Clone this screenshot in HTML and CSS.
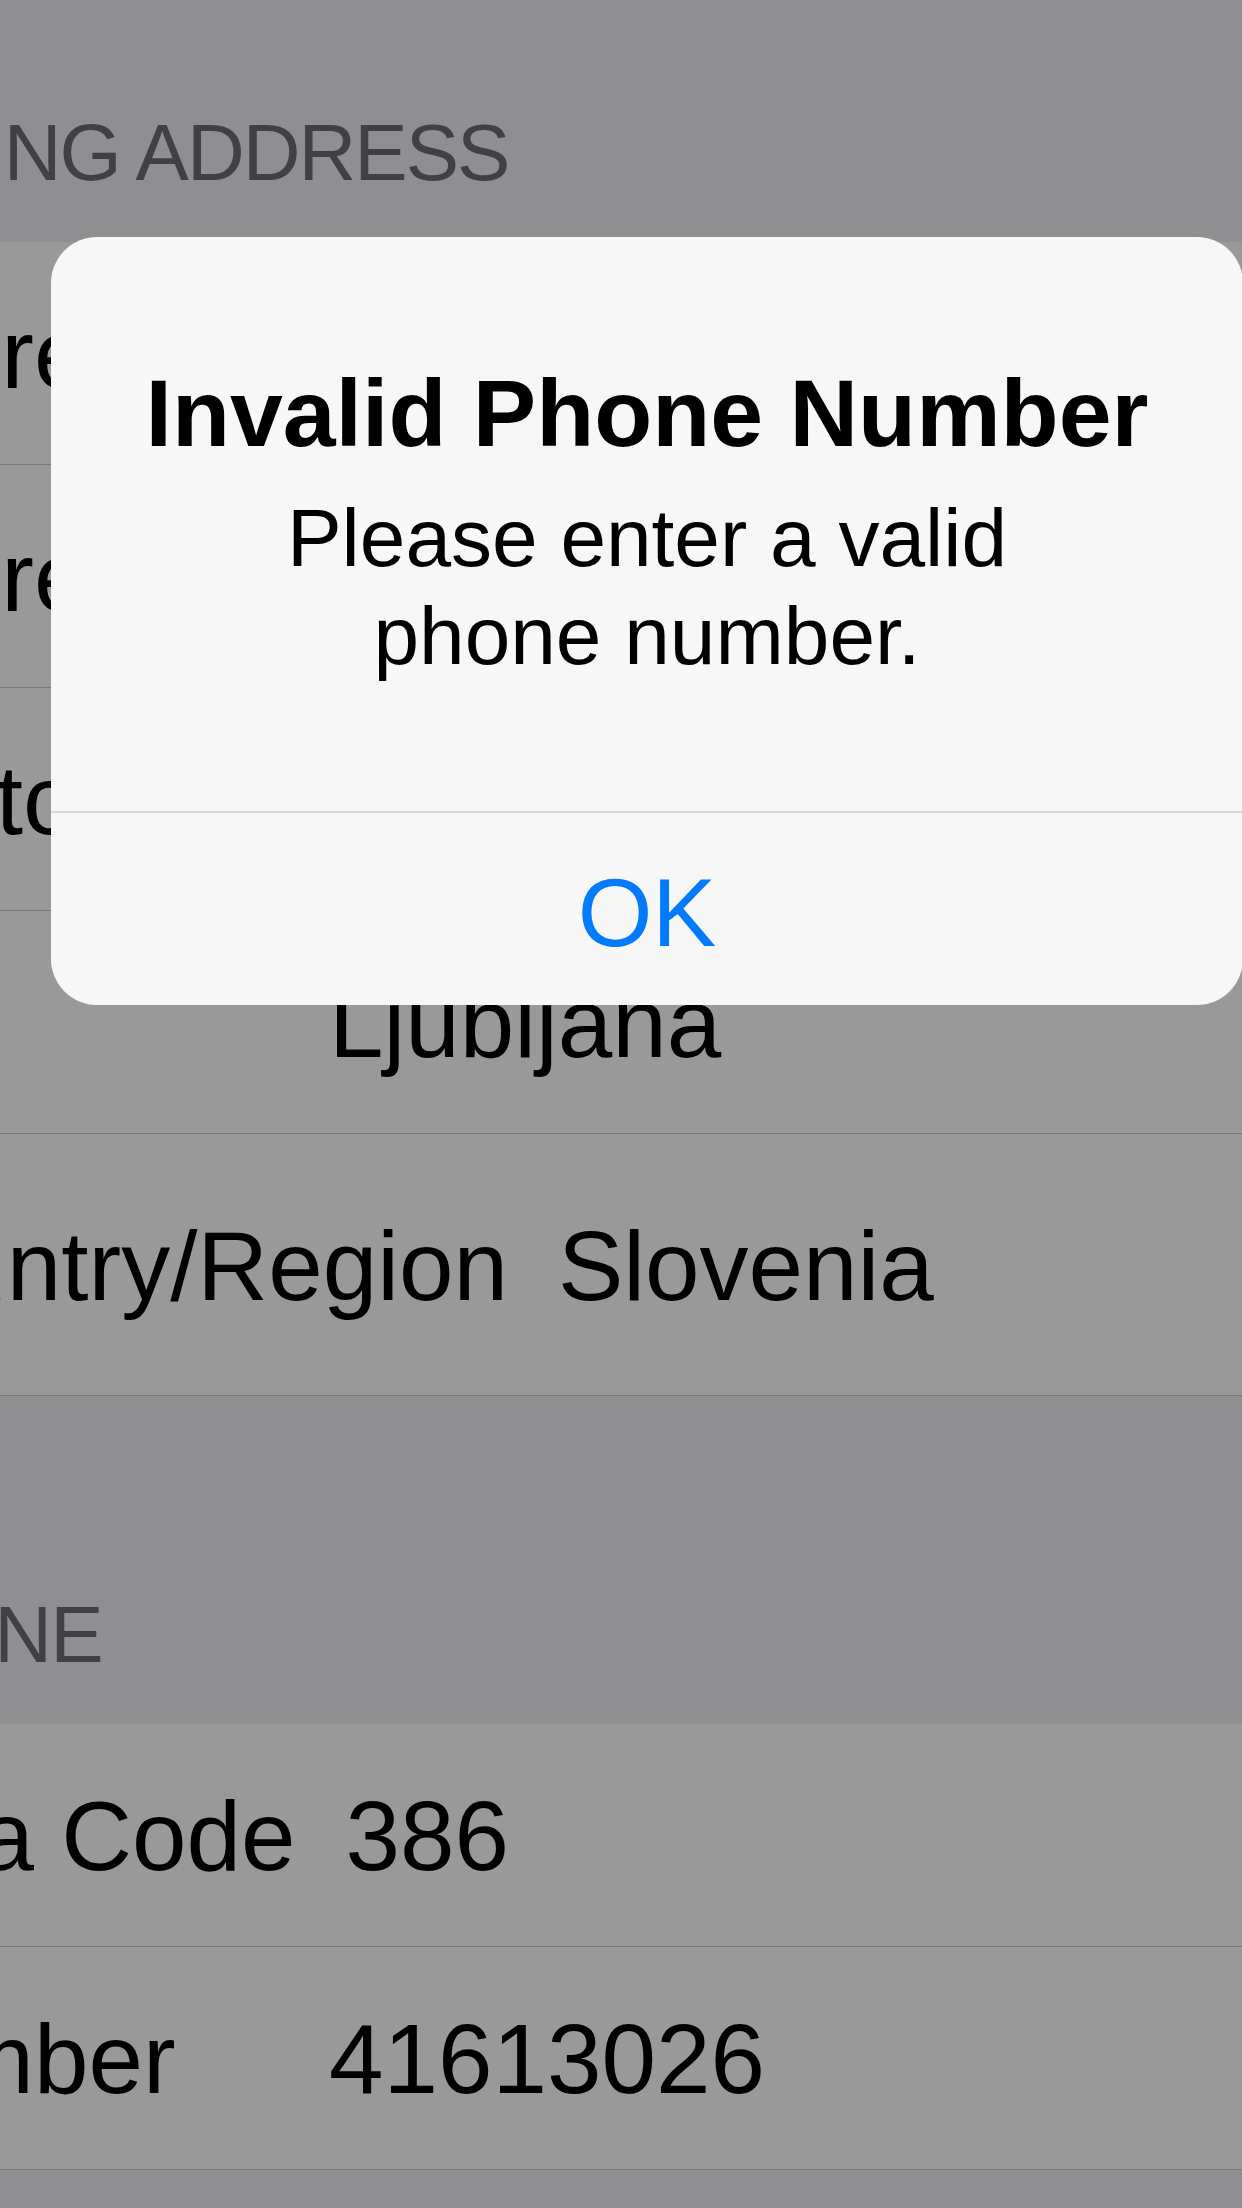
FILE: index.html
```html
<!DOCTYPE html>
<html lang="en">
<head>
    <meta charset="UTF-8">
    <title>Billing Address</title>
    <link rel="stylesheet" href="styles.css">
</head>
<body>
<!-- form is scrolled to the right, labels start off screen -->
    <div class="form">
        <div class="section-head first">BILLING ADDRESS</div>
        <div class="group">
            <div class="row"><span class="label">Address Line 1</span><span class="value"></span></div>
            <div class="row"><span class="label">Address Line 2</span><span class="value"></span></div>
            <div class="row"><span class="label">Postcode</span><span class="value"></span></div>
            <div class="row"><span class="label">City</span><span class="value">Ljubljana</span></div>
            <div class="row tall"><span class="label">Country/Region</span><span class="value">Slovenia</span></div>
        </div>
        <div class="section-head">PHONE</div>
        <div class="group">
            <div class="row"><span class="label">Area Code</span><span class="value">386</span></div>
            <div class="row"><span class="label">Number</span><span class="value">41613026</span></div>
        </div>
    </div>

    <div class="dim"></div>

    <div class="alert">
        <div class="alert-body">
            <h2 class="alert-title">Invalid Phone Number</h2>
            <p class="alert-text">Please enter a valid<br>phone number.</p>
        </div>
        <button type="button" class="alert-btn">OK</button>
    </div>
</body>
</html>
```

FILE: styles.css
```css
    html, body {
        margin: 0;
        padding: 0;
    }
    body {
        width: 1242px;
        height: 2208px;
        overflow: hidden;
        background: #efeff4;
        font-family: "Liberation Sans", Arial, sans-serif;
        color: #000;
    }
    div.form {
        margin-left: -173px; /*labels are scrolled out to the left*/
    }
    div.section-head {
        box-sizing: border-box;
        height: 328px;
        padding-top: 194px;
        padding-bottom: 44px;
        font-size: 80px;
        line-height: 90px;
        letter-spacing: -2px;
        color: #6d6d72;
        white-space: nowrap;
    }
    div.section-head.first {
        height: 242px;
        padding-top: 108px;
    }
    div.group {
        background: #fff;
        border-bottom: 1px solid #c8c7cc;
    }
    div.row {
        box-sizing: border-box;
        height: 223px;
        padding-top: 4px;
        border-top: 1px solid #c8c7cc;
        display: flex;
        align-items: center;
        font-size: 98px;
        line-height: 1.2;
        white-space: nowrap;
    }
    div.group div.row:first-child {
        border-top: none;
        height: 222px;
    }
    div.row.tall {
        height: 262px;
    }
    span.label {
        min-width: 452px;
        margin-right: 50px;
    }

    /*dark layer behind the alert*/
    div.dim {
        position: fixed;
        left: 0;
        top: 0;
        width: 100%;
        height: 100%;
        background: rgba(0, 0, 0, 0.4);
    }
    div.alert {
        position: fixed;
        top: 237px;
        left: 51px;
        width: 1192px;
        border-radius: 46px;
        background: #f7f7f7;
        overflow: hidden;
        text-align: center;
    }
    div.alert-body {
        padding-top: 121px;
        padding-bottom: 126px;
    }
    h2.alert-title {
        margin: 0;
        font-size: 95px;
        line-height: 110px;
        font-weight: bold;
    }
    p.alert-text {
        margin: 21px 0 0;
        font-size: 82px;
        line-height: 98px;
    }
    button.alert-btn {
        display: block;
        width: 100%;
        height: 194px;
        padding: 8px 0 0;
        margin: 0;
        border: none;
        border-top: 2px solid #d8d8db;
        background: transparent;
        font-family: "Liberation Sans", Arial, sans-serif;
        font-size: 96px;
        color: #007aff;
    }
```
